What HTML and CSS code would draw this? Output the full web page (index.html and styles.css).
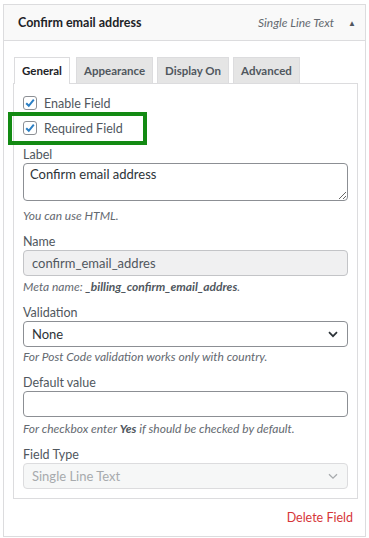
FILE: index.html
```html
<!DOCTYPE html>
<html lang="en">
<head>
    <meta charset="UTF-8">
    <meta name="viewport" content="width=device-width, initial-scale=1.0">
    <title>Confirm email address</title>
    <link rel="stylesheet" href="styles.css">
</head>
<body>
    <div class="field-box">
        <div class="field-head">
            <span class="field-title">Confirm email address</span>
            <span class="field-type">Single Line Text</span>
            <span class="toggle">&#9650;</span>
        </div>
        <div class="field-body">
            <div class="tabs">
                <div class="tab active">General</div>
                <div class="tab">Appearance</div>
                <div class="tab">Display On</div>
                <div class="tab">Advanced</div>
            </div>
            <div class="panel">
                <div class="check-row">
                    <span class="checkbox">
                        <svg viewBox="0 0 14 14" width="14" height="14"><path d="M3.2 7.2l2.6 2.6 5-6.2" fill="none" stroke="#2b7fc4" stroke-width="2"/></svg>
                    </span>
                    <span>Enable Field</span>
                </div>
                <div class="check-row marked">
                    <span class="checkbox">
                        <svg viewBox="0 0 14 14" width="14" height="14"><path d="M3.2 7.2l2.6 2.6 5-6.2" fill="none" stroke="#2b7fc4" stroke-width="2"/></svg>
                    </span>
                    <span>Required Field</span>
                    <span class="highlight"></span>
                </div>

                <label class="field-label first">Label</label>
                <textarea class="textarea">Confirm email address</textarea>
                <p class="desc desc-html">You can use HTML.</p>

                <label class="field-label">Name</label>
                <input class="input readonly" type="text" value="confirm_email_addres" readonly>
                <p class="desc desc-meta">Meta name: <b>_billing_confirm_email_addres</b>.</p>

                <label class="field-label">Validation</label>
                <div class="select">
                    <span>None</span>
                    <svg viewBox="0 0 10 7" width="10" height="7"><path d="M1 1.2l4 4 4-4" fill="none" stroke="#2c3338" stroke-width="1.7"/></svg>
                </div>
                <p class="desc desc-post">For Post Code validation works only with country.</p>

                <label class="field-label">Default value</label>
                <input class="input" type="text" value="">
                <p class="desc desc-default">For checkbox enter <b>Yes</b> if should be checked by default.</p>

                <label class="field-label">Field Type</label>
                <div class="select disabled">
                    <span>Single Line Text</span>
                    <svg viewBox="0 0 10 7" width="10" height="7"><path d="M1 1.2l4 4 4-4" fill="none" stroke="#a7aaad" stroke-width="1.3"/></svg>
                </div>
            </div>
            <div class="actions">
                <a class="delete" href="#">Delete Field</a>
            </div>
        </div>
    </div>
</body>
</html>
```

FILE: styles.css
```css
body {
    margin: 4px 0 0 3px;
    font-family: Lato, "Open Sans", sans-serif;
    font-size: 12px;
    color: #2c3338;
    background: #ffffff;
}
.field-box {
    width: 363px;
    box-sizing: border-box;
    border: 1px solid #dcdcde;
    background: #ffffff;
}
.field-head {
    display: flex;
    align-items: center;
    height: 35px;
    padding: 0 9px 0 14px;
    background: #f9f9f9;
    border-bottom: 1px solid #dcdcde;
}
.field-title {
    flex: 1;
    font-size: 12.5px;
    font-weight: 700;
    color: #1d2327;
}
.field-type {
    font-style: italic;
    color: #646970;
}
.toggle {
    margin-left: 14px;
    font-size: 8px;
    color: #50575e;
}
.field-body {
    padding: 16px 7px 0 9px;
}
.tabs {
    display: flex;
    gap: 4px;
    padding-left: 1px;
    height: 26px;
}
.tab {
    box-sizing: border-box;
    height: 26px;
    padding: 0 7px;
    line-height: 25px;
    border: 1px solid #dcdcde;
    border-bottom: none;
    background: #e5e5e5;
    color: #50575e;
    font-size: 11.5px;
    font-weight: 700;
}
.tab.active {
    height: 27px;
    margin-right: 2px;
    background: #ffffff;
    color: #1d2327;
    position: relative;
    z-index: 1;
}
.panel {
    border: 1px solid #dcdcde;
    padding: 8px 9px 9px 9px;
    background: #ffffff;
}
.check-row {
    display: flex;
    align-items: center;
    gap: 7px;
    height: 22px;
    color: #50575e;
    font-size: 12.5px;
}
.check-row + .check-row {
    margin-top: 3px;
}
.marked {
    position: relative;
}
.highlight {
    position: absolute;
    left: -15px;
    top: -5px;
    width: 139px;
    height: 33px;
    box-sizing: border-box;
    border: 4px solid #138a13;
}
.checkbox {
    display: block;
    box-sizing: border-box;
    width: 14px;
    height: 14px;
    border: 1px solid #8c8f94;
    border-radius: 3px;
    background: #ffffff;
}
.checkbox svg {
    display: block;
    margin: -1px;
}
.field-label {
    display: block;
    line-height: 14px;
    margin: 10px 0 1px;
    color: #50575e;
    font-size: 12.5px;
}
.field-label.first {
    margin-top: 9px;
}
.textarea,
.input,
.select {
    display: block;
    width: 100%;
    box-sizing: border-box;
    margin: 0;
    border: 1px solid #8c8f94;
    border-radius: 4px;
    background: #ffffff;
    font-family: inherit;
    font-size: 13px;
    color: #2c3338;
}
.textarea {
    height: 38px;
    padding: 0 6px;
    line-height: 20px;
    resize: vertical;
}
.input {
    height: 26px;
    padding: 0 8px;
}
.input.readonly {
    background: #f0f0f1;
    border-color: #c3c4c7;
    color: #50575e;
}
.select {
    display: flex;
    align-items: center;
    justify-content: space-between;
    height: 26px;
    padding: 0 9px 0 8px;
}
.select.disabled {
    background: #f6f7f7;
    border-color: #dcdcde;
    color: #a7aaad;
}
.desc {
    margin: 0;
    line-height: 18px;
    font-style: italic;
    color: #646970;
}
.desc b {
    font-weight: 700;
    color: #50575e;
}
.desc-html {
    margin-top: 6px;
}
.desc-meta {
    margin-top: 2px;
}
.desc-post {
    margin-top: 1px;
}
.desc-default {
    margin-top: 3px;
}
.actions {
    display: flex;
    justify-content: flex-end;
    height: 37px;
    align-items: center;
    padding-right: 5px;
}
.delete {
    color: #d63638;
    text-decoration: none;
    font-size: 12.5px;
}
```
